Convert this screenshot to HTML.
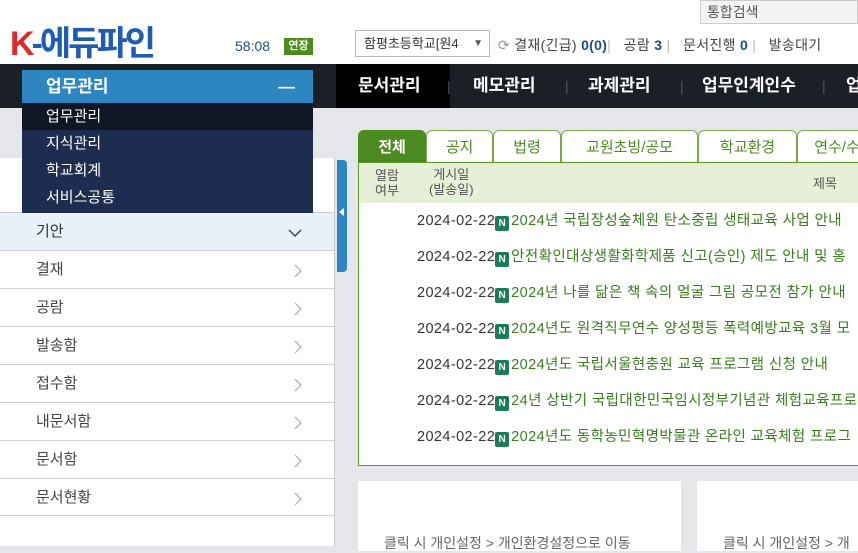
<!DOCTYPE html>
<html><head><meta charset="utf-8"><style>
*{margin:0;padding:0;box-sizing:border-box}
body{width:858px;height:546px;overflow:hidden;background:#e4e6e9;font-family:"Liberation Sans","Noto Sans CJK KR",sans-serif;position:relative;font-size:14px}
.abs{position:absolute}
.hdr{left:0;top:0;width:858px;height:64px;background:#fff}
.nav{left:0;top:64px;width:858px;height:44px;background:#1b1f26}
.nav span{position:absolute;top:0;height:44px;line-height:44px;color:#fff;font-weight:bold;font-size:17px}
.sep{color:#555!important;font-weight:normal!important;font-size:14px!important}
.side{left:0;top:158px;width:335px;height:388px;background:#fff;border-right:1px solid #ccc}
.row{position:absolute;left:0;width:334px;height:38px;border-top:1px solid #d0d0d0;line-height:38px;padding-left:36px;color:#444;font-size:15px}
.row svg{position:absolute;right:32px;top:13px}
.dd{left:22px;top:70px;width:291px;height:143px;background:#1c2d4f}
.dd div{height:27px;line-height:27px;padding-left:24px;color:#fff;font-size:15px}
.tab{position:absolute;top:130px;height:33px;border:1px solid #7aa84a;border-bottom:none;border-radius:6px 6px 0 0;background:#fff;color:#4c8a22;font-size:15px;text-align:center;line-height:33px}
.box{left:358px;top:162px;width:510px;height:304px;border:1px solid #5a9a2b;background:#fff}
.th{position:absolute;left:0;top:0;width:100%;height:40px;background:#e6f0d6;color:#555;font-size:13px;line-height:15px}
.it{position:absolute;left:58px;height:20px;line-height:20px;font-size:14.5px;color:#333;white-space:nowrap;letter-spacing:0.4px}
.it b{display:inline-block;width:14px;height:15px;background:#1d7b5c;color:#fff;font-size:10px;line-height:15px;text-align:center;border-radius:2px;vertical-align:-1px;margin-right:2px;letter-spacing:0}
.it em{font-style:normal;color:#3a7d1e}
</style></head><body>
<div class="abs hdr"></div>
<div class="abs" style="left:10px;top:16px;font-size:34px;font-weight:bold;color:#1f5db3;letter-spacing:-3px"><span style="color:#e0282d">K</span>-에듀파인</div>
<div class="abs" style="left:235px;top:38px;color:#1f4d7a;font-size:14px">58:08</div>
<div class="abs" style="left:284px;top:38px;width:29px;height:17px;background:#4b8c1c;color:#fff;font-size:11px;line-height:17px;text-align:center;font-weight:bold">연장</div>
<div class="abs" style="left:355px;top:30px;width:135px;height:27px;border:1px solid #bbb;background:#fff;font-size:13px;line-height:25px;padding-left:8px;color:#333">함평초등학교[원4 <span style="position:absolute;right:6px;font-size:10px;color:#555">▼</span></div>
<div class="abs" style="left:700px;top:0;width:158px;height:24px;background:#f4f4f4;border:1px solid #ccc;font-size:14px;line-height:22px;padding-left:6px;color:#555">통합검색</div>
<div class="abs" style="left:498px;top:35px;font-size:14px;color:#444;white-space:nowrap;letter-spacing:0.3px"><span style="color:#999">⟳</span> 결재(긴급) <b style="color:#1f4d7a">0(0)</b><span style="color:#bbb">|</span> &nbsp;&nbsp;공람 <b style="color:#1f4d7a">3</b> <span style="color:#bbb">|</span> &nbsp;&nbsp;문서진행 <b style="color:#1f4d7a">0</b> <span style="color:#bbb">|</span> &nbsp;&nbsp;발송대기</div>
<div class="abs nav">
<div style="position:absolute;left:336px;top:0;width:114px;height:44px;background:#000"></div>
<span style="left:358px">문서관리</span><span class="sep" style="left:447px">|</span>
<span style="left:473px">메모관리</span><span class="sep" style="left:565px">|</span>
<span style="left:588px">과제관리</span><span class="sep" style="left:680px">|</span>
<span style="left:702px">업무인계인수</span><span class="sep" style="left:822px">|</span>
<span style="left:846px">업</span>
</div>
<div class="abs side">
<div class="row" style="top:54px;background:#e8f0fa;color:#333;border-top:1px solid #ccc">기안<svg width="14" height="12" style="top:14px;right:32px"><path d="M1 3 L7 9 L13 3" stroke="#444" stroke-width="1.5" fill="none"/></svg></div>
<div class="row" style="top:92px">결재<svg width="8" height="14"><path d="M1 1 L7 7 L1 13" stroke="#aaa" stroke-width="1.2" fill="none"/></svg></div>
<div class="row" style="top:130px">공람<svg width="8" height="14"><path d="M1 1 L7 7 L1 13" stroke="#aaa" stroke-width="1.2" fill="none"/></svg></div>
<div class="row" style="top:168px">발송함<svg width="8" height="14"><path d="M1 1 L7 7 L1 13" stroke="#aaa" stroke-width="1.2" fill="none"/></svg></div>
<div class="row" style="top:206px">접수함<svg width="8" height="14"><path d="M1 1 L7 7 L1 13" stroke="#aaa" stroke-width="1.2" fill="none"/></svg></div>
<div class="row" style="top:244px">내문서함<svg width="8" height="14"><path d="M1 1 L7 7 L1 13" stroke="#aaa" stroke-width="1.2" fill="none"/></svg></div>
<div class="row" style="top:282px">문서함<svg width="8" height="14"><path d="M1 1 L7 7 L1 13" stroke="#aaa" stroke-width="1.2" fill="none"/></svg></div>
<div class="row" style="top:320px;border-bottom:1px solid #d0d0d0">문서현황<svg width="8" height="14"><path d="M1 1 L7 7 L1 13" stroke="#aaa" stroke-width="1.2" fill="none"/></svg></div>
</div>
<div class="abs" style="left:337px;top:160px;width:10px;height:112px;background:#2e86c1;border-radius:0 4px 4px 0"><div style="position:absolute;left:2px;top:48px;border:4px solid transparent;border-right:5px solid #fff;border-left:none"></div></div>
<div class="abs dd">
<div style="height:33px;line-height:33px;background:#2e86c1;font-weight:bold;font-size:17px">업무관리<span style="position:absolute;right:18px;top:0">—</span></div>
<div style="background:#0f1726">업무관리</div>
<div>지식관리</div><div>학교회계</div><div>서비스공통</div>
</div>
<div class="tab" style="left:358px;width:68px;background:#4c8a22;color:#fff;font-weight:bold;border-color:#4c8a22">전체</div>
<div class="tab" style="left:426px;width:67px">공지</div>
<div class="tab" style="left:493px;width:68px">법령</div>
<div class="tab" style="left:561px;width:137px">교원초빙/공모</div>
<div class="tab" style="left:698px;width:99px">학교환경</div>
<div class="tab" style="left:797px;width:80px">연수/수</div>
<div class="abs box">
<div class="th"><div style="position:absolute;left:16px;top:5px">열람<br>여부</div><div style="position:absolute;left:70px;top:4px;text-align:center">게시일<br>(발송일)</div><div style="position:absolute;left:454px;top:13px">제목</div></div>
<div class="it" style="top:48px">2024-02-22<b>N</b><em>2024년 국립장성숲체원 탄소중립 생태교육 사업 안내</em></div>
<div class="it" style="top:84px">2024-02-22<b>N</b><em>안전확인대상생활화학제품 신고(승인) 제도 안내 및 홍</em></div>
<div class="it" style="top:120px">2024-02-22<b>N</b><em>2024년 나를 닮은 책 속의 얼굴 그림 공모전 참가 안내</em></div>
<div class="it" style="top:156px">2024-02-22<b>N</b><em>2024년도 원격직무연수 양성평등 폭력예방교육 3월 모</em></div>
<div class="it" style="top:192px">2024-02-22<b>N</b><em>2024년도 국립서울현충원 교육 프로그램 신청 안내</em></div>
<div class="it" style="top:228px">2024-02-22<b>N</b><em>24년 상반기 국립대한민국임시정부기념관 체험교육프로</em></div>
<div class="it" style="top:264px">2024-02-22<b>N</b><em>2024년도 동학농민혁명박물관 온라인 교육체험 프로그</em></div>
</div>
<div class="abs" style="left:358px;top:481px;width:323px;height:70px;background:#fff"><div style="position:absolute;left:26px;top:52px;font-size:14px;color:#666;white-space:nowrap">클릭 시 개인설정 &gt; 개인환경설정으로 이동</div></div>
<div class="abs" style="left:697px;top:481px;width:170px;height:70px;background:#fff"><div style="position:absolute;left:26px;top:52px;font-size:14px;color:#666;white-space:nowrap">클릭 시 개인설정 &gt; 개</div></div>
</body></html>
